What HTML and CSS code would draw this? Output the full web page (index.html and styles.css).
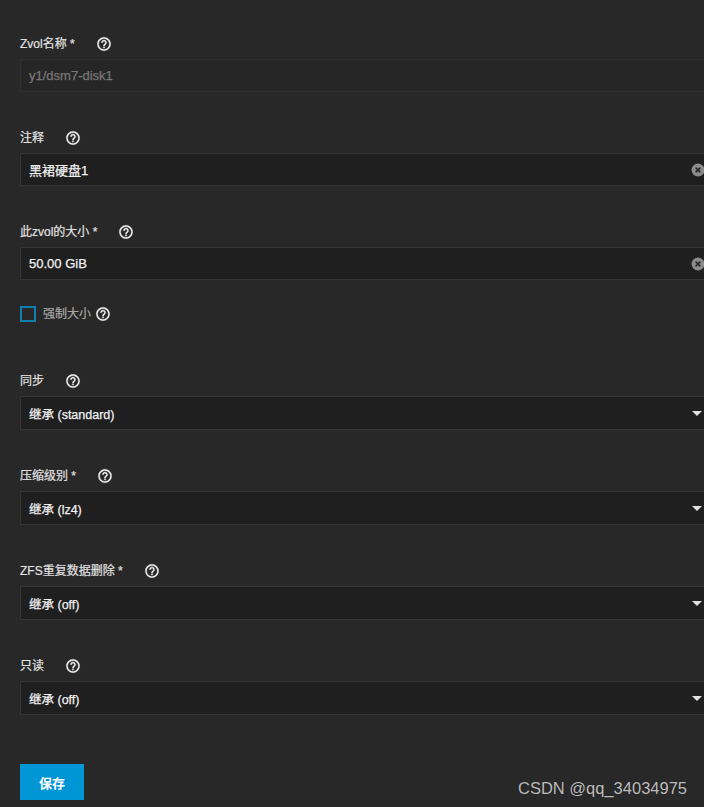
FILE: index.html
```html
<!DOCTYPE html>
<html>
<head>
<meta charset="utf-8">
<link rel="stylesheet" href="styles.css">
</head>
<body>
<div class="page">
  <form class="form">
    <div class="field">
      <div class="label-row"><span class="label">Zvol名称 *</span><svg class="help" viewBox="0 0 24 24"><path d="M11 18h2v-2h-2v2zm1-16C6.48 2 2 6.48 2 12s4.48 10 10 10 10-4.48 10-10S17.52 2 12 2zm0 18c-4.41 0-8-3.59-8-8s3.59-8 8-8 8 3.59 8 8-3.59 8-8 8zm0-14c-2.21 0-4 1.79-4 4h2c0-1.1.9-2 2-2s2 .9 2 2c0 2-3 1.75-3 5h2c0-2.25 3-2.5 3-5 0-2.21-1.79-4-4-4z"/></svg></div>
      <div class="input disabled">y1/dsm7-disk1</div>
    </div>
    <div class="field">
      <div class="label-row"><span class="label">注释</span><svg class="help" viewBox="0 0 24 24"><path d="M11 18h2v-2h-2v2zm1-16C6.48 2 2 6.48 2 12s4.48 10 10 10 10-4.48 10-10S17.52 2 12 2zm0 18c-4.41 0-8-3.59-8-8s3.59-8 8-8 8 3.59 8 8-3.59 8-8 8zm0-14c-2.21 0-4 1.79-4 4h2c0-1.1.9-2 2-2s2 .9 2 2c0 2-3 1.75-3 5h2c0-2.25 3-2.5 3-5 0-2.21-1.79-4-4-4z"/></svg></div>
      <div class="input">黑裙硬盘1<svg class="clear" viewBox="0 0 14 14"><circle cx="7" cy="7" r="6.5" fill="#8c8c8c"/><path d="M4.6 4.6l4.8 4.8M9.4 4.6l-4.8 4.8" stroke="#2a2a2a" stroke-width="1.6"/></svg></div>
    </div>
    <div class="field">
      <div class="label-row"><span class="label">此zvol的大小 *</span><svg class="help" viewBox="0 0 24 24"><path d="M11 18h2v-2h-2v2zm1-16C6.48 2 2 6.48 2 12s4.48 10 10 10 10-4.48 10-10S17.52 2 12 2zm0 18c-4.41 0-8-3.59-8-8s3.59-8 8-8 8 3.59 8 8-3.59 8-8 8zm0-14c-2.21 0-4 1.79-4 4h2c0-1.1.9-2 2-2s2 .9 2 2c0 2-3 1.75-3 5h2c0-2.25 3-2.5 3-5 0-2.21-1.79-4-4-4z"/></svg></div>
      <div class="input">50.00 GiB<svg class="clear" viewBox="0 0 14 14"><circle cx="7" cy="7" r="6.5" fill="#8c8c8c"/><path d="M4.6 4.6l4.8 4.8M9.4 4.6l-4.8 4.8" stroke="#2a2a2a" stroke-width="1.6"/></svg></div>
    </div>
    <div class="check-row">
      <span class="checkbox"></span><span class="check-label">强制大小</span><svg class="help small-gap" viewBox="0 0 24 24"><path d="M11 18h2v-2h-2v2zm1-16C6.48 2 2 6.48 2 12s4.48 10 10 10 10-4.48 10-10S17.52 2 12 2zm0 18c-4.41 0-8-3.59-8-8s3.59-8 8-8 8 3.59 8 8-3.59 8-8 8zm0-14c-2.21 0-4 1.79-4 4h2c0-1.1.9-2 2-2s2 .9 2 2c0 2-3 1.75-3 5h2c0-2.25 3-2.5 3-5 0-2.21-1.79-4-4-4z"/></svg>
    </div>
    <div class="field sel">
      <div class="label-row"><span class="label">同步</span><svg class="help" viewBox="0 0 24 24"><path d="M11 18h2v-2h-2v2zm1-16C6.48 2 2 6.48 2 12s4.48 10 10 10 10-4.48 10-10S17.52 2 12 2zm0 18c-4.41 0-8-3.59-8-8s3.59-8 8-8 8 3.59 8 8-3.59 8-8 8zm0-14c-2.21 0-4 1.79-4 4h2c0-1.1.9-2 2-2s2 .9 2 2c0 2-3 1.75-3 5h2c0-2.25 3-2.5 3-5 0-2.21-1.79-4-4-4z"/></svg></div>
      <div class="input select">继承 (standard)<span class="arrow"></span></div>
    </div>
    <div class="field sel">
      <div class="label-row"><span class="label">压缩级别 *</span><svg class="help" viewBox="0 0 24 24"><path d="M11 18h2v-2h-2v2zm1-16C6.48 2 2 6.48 2 12s4.48 10 10 10 10-4.48 10-10S17.52 2 12 2zm0 18c-4.41 0-8-3.59-8-8s3.59-8 8-8 8 3.59 8 8-3.59 8-8 8zm0-14c-2.21 0-4 1.79-4 4h2c0-1.1.9-2 2-2s2 .9 2 2c0 2-3 1.75-3 5h2c0-2.25 3-2.5 3-5 0-2.21-1.79-4-4-4z"/></svg></div>
      <div class="input select">继承 (lz4)<span class="arrow"></span></div>
    </div>
    <div class="field sel">
      <div class="label-row"><span class="label">ZFS重复数据删除 *</span><svg class="help" viewBox="0 0 24 24"><path d="M11 18h2v-2h-2v2zm1-16C6.48 2 2 6.48 2 12s4.48 10 10 10 10-4.48 10-10S17.52 2 12 2zm0 18c-4.41 0-8-3.59-8-8s3.59-8 8-8 8 3.59 8 8-3.59 8-8 8zm0-14c-2.21 0-4 1.79-4 4h2c0-1.1.9-2 2-2s2 .9 2 2c0 2-3 1.75-3 5h2c0-2.25 3-2.5 3-5 0-2.21-1.79-4-4-4z"/></svg></div>
      <div class="input select">继承 (off)<span class="arrow"></span></div>
    </div>
    <div class="field sel last">
      <div class="label-row"><span class="label">只读</span><svg class="help" viewBox="0 0 24 24"><path d="M11 18h2v-2h-2v2zm1-16C6.48 2 2 6.48 2 12s4.48 10 10 10 10-4.48 10-10S17.52 2 12 2zm0 18c-4.41 0-8-3.59-8-8s3.59-8 8-8 8 3.59 8 8-3.59 8-8 8zm0-14c-2.21 0-4 1.79-4 4h2c0-1.1.9-2 2-2s2 .9 2 2c0 2-3 1.75-3 5h2c0-2.25 3-2.5 3-5 0-2.21-1.79-4-4-4z"/></svg></div>
      <div class="input select">继承 (off)<span class="arrow"></span></div>
    </div>
    <div class="actions">
      <button type="button" class="btn">保存</button>
    </div>
  </form>
  <div class="watermark">CSDN @qq_34034975</div>
</div>
</body>
</html>
```
FILE: styles.css
```css
html, body {
  margin: 0;
  padding: 0;
  background: #282828;
  overflow: hidden;
}
body {
  font-family: "Liberation Sans", Arial, "Noto Sans CJK SC", sans-serif;
  color: #e6e6e6;
}
.page {
  position: relative;
  width: 704px;
  height: 807px;
  overflow: hidden;
}
.form {
  padding: 36px 0 0 20px;
  width: 692px;
}
.field {
  margin-bottom: 38px;
}
.field.last {
  margin-bottom: 49px;
}
.label-row {
  display: flex;
  align-items: center;
  height: 16px;
  margin-bottom: 7px;
}
.label {
  font-size: 12px;
  color: #e2e2e2;
  line-height: 16px;
  -webkit-text-stroke: 0.2px #e2e2e2;
}
.help {
  width: 16px;
  height: 16px;
  fill: #f4f4f4;
  stroke: #f4f4f4;
  stroke-width: 0.4;
  margin-left: 21px;
  flex: none;
}
.help.small-gap {
  margin-left: 4px;
}
.input {
  position: relative;
  height: 33px;
  box-sizing: border-box;
  background: #1f1f1f;
  border: 1px solid #353535;
  padding: 0 8px;
  display: flex;
  align-items: center;
  font-size: 13px;
  color: #f2f2f2;
  -webkit-text-stroke: 0.25px #f2f2f2;
}
.input.disabled {
  background: #262626;
  border-color: #303030;
  color: #787878;
  -webkit-text-stroke: 0.25px #787878;
}
.input.select {
  height: 34px;
  font-size: 12.5px;
}
.clear {
  position: absolute;
  right: 6px;
  top: 50%;
  margin-top: -7px;
  width: 14px;
  height: 14px;
}
.arrow {
  position: absolute;
  right: 9px;
  top: 50%;
  margin-top: -2px;
  width: 0;
  height: 0;
  border-left: 5px solid transparent;
  border-right: 5px solid transparent;
  border-top: 5px solid #e0e0e0;
}
.check-row {
  display: flex;
  align-items: center;
  height: 16px;
  margin-top: -12px;
  margin-bottom: 51px;
}
.checkbox {
  width: 16px;
  height: 16px;
  box-sizing: border-box;
  border: 2px solid #0f7fb0;
  flex: none;
}
.check-label {
  margin-left: 7px;
  font-size: 12px;
  color: #a8a8a8;
  line-height: 16px;
  -webkit-text-stroke: 0.2px #a8a8a8;
}
.actions {
  display: flex;
}
.btn {
  width: 64px;
  height: 36px;
  border: none;
  background: #0095d5;
  color: #ffffff;
  font-family: "Liberation Sans", Arial, "Noto Sans CJK SC", sans-serif;
  font-size: 13px;
  font-weight: bold;
  padding: 0;
}
.watermark {
  position: absolute;
  left: 518px;
  top: 779px;
  font-size: 16.5px;
  color: #bdbdbd;
  text-shadow: 0 0 1px rgba(0,0,0,0.4);
}
```
